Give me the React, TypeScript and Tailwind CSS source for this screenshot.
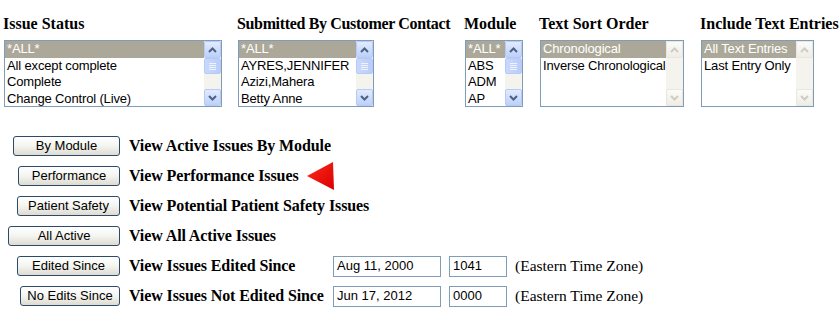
import React from 'react';

type ListProps = {
    width: number;
    items: string[];
    disabled?: boolean;
};

const serif = { fontFamily: '"Liberation Serif", "Times New Roman", serif' };
const sans = { fontFamily: '"Liberation Sans", Arial, sans-serif' };

const ArrowButton: React.FC<{ dir: 'up' | 'down'; disabled?: boolean }> = ({ dir, disabled }) => (
    <div
        className={
            disabled
                ? 'flex h-[17px] w-[17px] items-center justify-center rounded-[2px] border border-[#e9e7dd] bg-gradient-to-b from-[#fbfbf8] to-[#eeede6]'
                : 'flex h-[17px] w-[17px] items-center justify-center rounded-[2px] border border-[#b6c9f7] bg-gradient-to-b from-[#e2ebfe] to-[#bcd0f9]'
        }
    >
        <svg width="9" height="6" viewBox="0 0 9 6">
            <path
                d={dir === 'up' ? 'M1 5 L4.5 1.5 L8 5' : 'M1 1 L4.5 4.5 L8 1'}
                fill="none"
                stroke={disabled ? '#cfcdc2' : '#4d6185'}
                strokeWidth="2"
            />
        </svg>
    </div>
);

const Thumb: React.FC = () => (
    <div className="flex h-[16px] w-[17px] flex-col items-center justify-center gap-[1px] rounded-[2px] border border-[#b6c9f7] bg-gradient-to-r from-[#c9d8fc] to-[#b9cdf8]">
        <div className="h-[1px] w-[7px] bg-[#eef3fe]" />
        <div className="h-[1px] w-[7px] bg-[#eef3fe]" />
        <div className="h-[1px] w-[7px] bg-[#eef3fe]" />
        <div className="h-[1px] w-[7px] bg-[#eef3fe]" />
    </div>
);

const Scrollbar: React.FC<{ disabled?: boolean }> = ({ disabled }) => (
    <div className="flex w-[17px] shrink-0 flex-col bg-[#f4f3ed]">
        <ArrowButton dir="up" disabled={disabled} />
        {!disabled && <Thumb />}
        <div className="flex-1" />
        <ArrowButton dir="down" disabled={disabled} />
    </div>
);

const ListBox: React.FC<ListProps> = ({ width, items, disabled }) => (
    <div className="ml-[1px] flex h-[67px] border border-[#7f9db9] bg-white" style={{ width }}>
        <div className="flex-1 overflow-hidden text-[13px] tracking-[-0.15px] text-black" style={sans}>
            {items.map((item, i) => (
                <div
                    key={item}
                    className={
                        i === 0
                            ? 'h-[16.5px] whitespace-nowrap bg-[#aca899] px-[2px] leading-[16.5px] text-white'
                            : 'h-[16.5px] whitespace-nowrap px-[2px] leading-[16.5px]'
                    }
                >
                    {item}
                </div>
            ))}
        </div>
        <Scrollbar disabled={disabled} />
    </div>
);

const columns = [
    { title: 'Issue Status', col: 234, width: 218, items: ['*ALL*', 'All except complete', 'Complete', 'Change Control (Live)'] },
    { title: 'Submitted By Customer Contact', col: 227, width: 136, items: ['*ALL*', 'AYRES,JENNIFER', 'Azizi,Mahera', 'Betty Anne'], tight: true },
    { title: 'Module', col: 75, width: 58, items: ['*ALL*', 'ABS', 'ADM', 'AP'] },
    { title: 'Text Sort Order', col: 161, width: 144, items: ['Chronological', 'Inverse Chronological'], disabled: true },
    { title: 'Include Text Entries', col: 136, width: 113, items: ['All Text Entries', 'Last Entry Only'], disabled: true },
];

const XpButton: React.FC<{ label: string; width: number }> = ({ label, width }) => (
    <button
        className="h-[20px] rounded-[3px] border border-[#2b4a6e] bg-gradient-to-b from-[#ffffff] via-[#f4f4f0] to-[#dedbd0] text-[13px] leading-[18px] text-black"
        style={{ ...sans, width }}
    >
        {label}
    </button>
);

const TextBox: React.FC<{ value: string; width: number }> = ({ value, width }) => (
    <div
        className="flex h-[21px] items-center border border-[#7f9db9] bg-white px-[3px] text-[13px] text-black"
        style={{ ...sans, width }}
    >
        {value}
    </div>
);

const rows = [
    { button: 'By Module', bw: 107, label: 'View Active Issues By Module' },
    { button: 'Performance', bw: 102, label: 'View Performance Issues', arrow: true },
    { button: 'Patient Safety', bw: 103, label: 'View Potential Patient Safety Issues' },
    { button: 'All Active', bw: 112, label: 'View All Active Issues' },
    { button: 'Edited Since', bw: 103, label: 'View Issues Edited Since', date: 'Aug 11, 2000', time: '1041' },
    { button: 'No Edits Since', bw: 100, label: 'View Issues Not Edited Since', date: 'Jun 17, 2012', time: '0000' },
];

export default function App() {
    return (
        <div className="h-[315px] w-[840px] overflow-hidden bg-white text-black">
            <div className="flex pl-[3px] pt-[15px]">
                {columns.map(c => (
                    <div key={c.title} className="shrink-0" style={{ width: c.col }}>
                        <div
                            className={
                                c.tight
                                    ? 'whitespace-nowrap text-[16px] font-bold leading-[18px] tracking-[-0.35px]'
                                    : 'whitespace-nowrap text-[16px] font-bold leading-[18px]'
                            }
                            style={serif}
                        >
                            {c.title}
                        </div>
                        <div className="mt-[7px]">
                            <ListBox width={c.width} items={c.items} disabled={c.disabled} />
                        </div>
                    </div>
                ))}
            </div>

            <div className="mt-[24px] flex flex-col">
                {rows.map(r => (
                    <div key={r.button} className="flex h-[30px] items-center">
                        <div className="flex w-[120px] shrink-0 justify-end">
                            <XpButton label={r.button} width={r.bw} />
                        </div>
                        <div className="flex w-[212px] shrink-0 items-center pl-[9px]">
                            <span className="whitespace-nowrap text-[16px] font-bold tracking-[-0.1px]" style={serif}>
                                {r.label}
                            </span>
                            {r.arrow && (
                                <svg className="ml-[8px] shrink-0" width="27" height="29" viewBox="0 0 27 29">
                                    <defs>
                                        <linearGradient id="tri" x1="0" y1="0" x2="1" y2="1">
                                            <stop offset="0" stopColor="#ff2a1a" />
                                            <stop offset="1" stopColor="#d80000" />
                                        </linearGradient>
                                    </defs>
                                    <polygon points="0,14 26,0 27,28" fill="url(#tri)" />
                                </svg>
                            )}
                        </div>
                        {r.date && (
                            <div className="ml-[1px] flex items-center gap-[8px]">
                                <TextBox value={r.date} width={108} />
                                <TextBox value={r.time!} width={58} />
                                <span className="text-[15.5px]" style={serif}>
                                    (Eastern Time Zone)
                                </span>
                            </div>
                        )}
                    </div>
                ))}
            </div>
        </div>
    );
}
